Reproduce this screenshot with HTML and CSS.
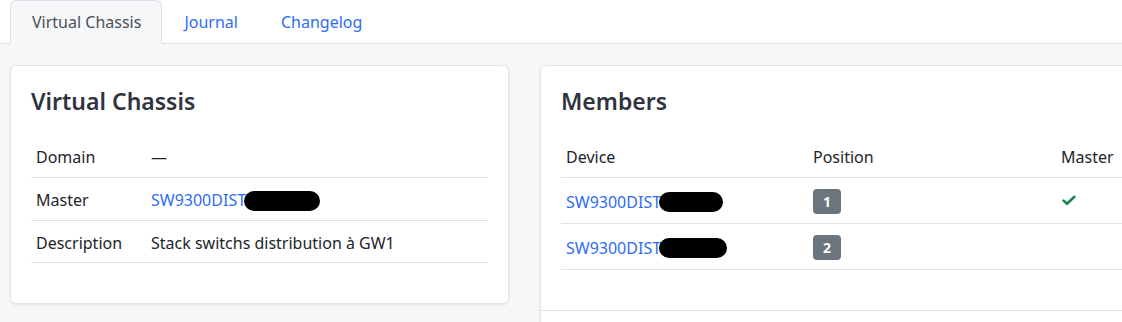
FILE: index.html
```html
<!DOCTYPE html>
<html lang="fr">
<head>
    <meta charset="UTF-8">
    <title>Virtual Chassis</title>
    <link rel="stylesheet" href="styles.css">
</head>
<body>

<!-- onglets -->
<nav class="tabs">
    <a class="tab active" href="#">Virtual Chassis</a>
    <a class="tab" href="#">Journal</a>
    <a class="tab" href="#">Changelog</a>
</nav>

<main class="page">
    <!-- carte gauche -->
    <section class="card">
        <div class="card-body">
            <h2 class="card-title">Virtual Chassis</h2>
            <table class="attr-table">
                <tr>
                    <th>Domain</th>
                    <td>&mdash;</td>
                </tr>
                <tr>
                    <th>Master</th>
                    <td><a href="#">SW9300DIST</a><span class="redact r-master"></span></td>
                </tr>
                <tr>
                    <th>Description</th>
                    <td>Stack switchs distribution à GW1</td>
                </tr>
            </table>
        </div>
    </section>

    <!-- carte droite -->
    <section class="card card-wide">
        <div class="card-body">
            <h2 class="card-title">Members</h2>
            <table class="members-table">
                <thead>
                    <tr>
                        <th class="col-device">Device</th>
                        <th class="col-position">Position</th>
                        <th>Master</th>
                    </tr>
                </thead>
                <tbody>
                    <tr>
                        <td><a href="#">SW9300DIST</a><span class="redact r-one"></span></td>
                        <td><span class="badge">1</span></td>
                        <td>
                            <svg class="check" viewBox="0 0 14 11" width="14" height="11">
                                <path d="M1.6 5.6 L5 8.8 L12.4 1.8" fill="none" stroke="#198754" stroke-width="2.6" stroke-linecap="round" stroke-linejoin="round"/>
                            </svg>
                        </td>
                    </tr>
                    <tr>
                        <td><a href="#">SW9300DIST</a><span class="redact r-two"></span></td>
                        <td><span class="badge">2</span></td>
                        <td></td>
                    </tr>
                </tbody>
            </table>
        </div>
        <div class="card-footer"></div>
    </section>
</main>

</body>
</html>
```

FILE: styles.css
```css
/* --- base --- */
:root {
    --text-color: #212529;
    --title-color: #303440;
    --link-color: #2f6cf5;
    --line-color: #dee2e6;
    --page-bg: #f6f7f9;
    --muted-badge: #6c757d;
}

html, body {
    overflow: hidden;
}

body {
    margin: 0;
    width: 1122px;
    height: 322px;
    font-family: "Noto Sans", "Liberation Sans", sans-serif;
    font-size: 16px;
    color: var(--text-color);
    background-color: var(--page-bg);
}

a {
    color: var(--link-color);
    text-decoration: none;
}

/* --- onglets --- */
.tabs {
    display: flex;
    height: 44px;
    padding-left: 10px;
    background-color: #fff;
    border-bottom: 1px solid var(--line-color);
    box-sizing: border-box;
}

.tab {
    display: flex;
    align-items: center;
    padding: 0 20px 1px 21px;
    margin-bottom: -1px;
    border: 1px solid transparent;
    border-top-left-radius: 6px;
    border-top-right-radius: 6px;
}

.tab.active {
    color: #495057;
    background-color: var(--page-bg);
    border-color: var(--line-color) var(--line-color) var(--page-bg);
}

/* --- cartes --- */
.page {
    display: flex;
    align-items: flex-start;
    gap: 31px;
    padding: 21px 0 0 10px;
}

.card {
    flex: 0 0 499px;
    background-color: #fff;
    border: 1px solid #e3e5e8;
    border-radius: 6px;
    box-shadow: 0 1px 3px rgba(0, 0, 0, 0.08);
    box-sizing: border-box;
}

.card-wide {
    flex: 0 0 720px;
}

.card-body {
    padding: 20px 20px 40px 20px;
}

.card-title {
    margin: 0 0 18px 0;
    font-size: 23px;
    font-weight: 600;
    line-height: 30px;
    color: var(--title-color);
}

.card-footer {
    border-top: 1px solid var(--line-color);
    height: 20px;
}

/* --- tableaux --- */
table {
    width: 100%;
    border-collapse: collapse;
}

th, td {
    text-align: left;
    font-weight: 400;
    padding: 3px 5px 0 5px;
    vertical-align: middle;
}

.attr-table tr {
    height: 43px;
    border-bottom: 1px solid var(--line-color);
}

.attr-table tr:last-child {
    height: 42px;
}

.attr-table th {
    width: 105px;
}

.members-table {
    table-layout: fixed;
}

.members-table thead tr {
    height: 43px;
    border-bottom: 1px solid var(--line-color);
}

.members-table tbody tr {
    height: 46px;
    border-bottom: 1px solid var(--line-color);
}

.members-table .col-device {
    width: 237px;
}

.members-table .col-position {
    width: 238px;
}

/* pastilles de masquage */
.redact {
    display: inline-block;
    vertical-align: middle;
    height: 20px;
    margin-left: -2px;
    margin-top: -2px;
    background-color: #000;
    border-radius: 10px;
}
.r-master { width: 76px; }
.r-one { width: 64px; }
.r-two { width: 68px; }

.badge {
    display: inline-flex;
    align-items: center;
    justify-content: center;
    width: 28px;
    height: 25px;
    margin-top: -2px;
    border-radius: 4px;
    background-color: var(--muted-badge);
    color: #fff;
    font-size: 14px;
    font-weight: 700;
}

.check {
    display: block;
    margin: -2px 0 0 1px;
}
```
